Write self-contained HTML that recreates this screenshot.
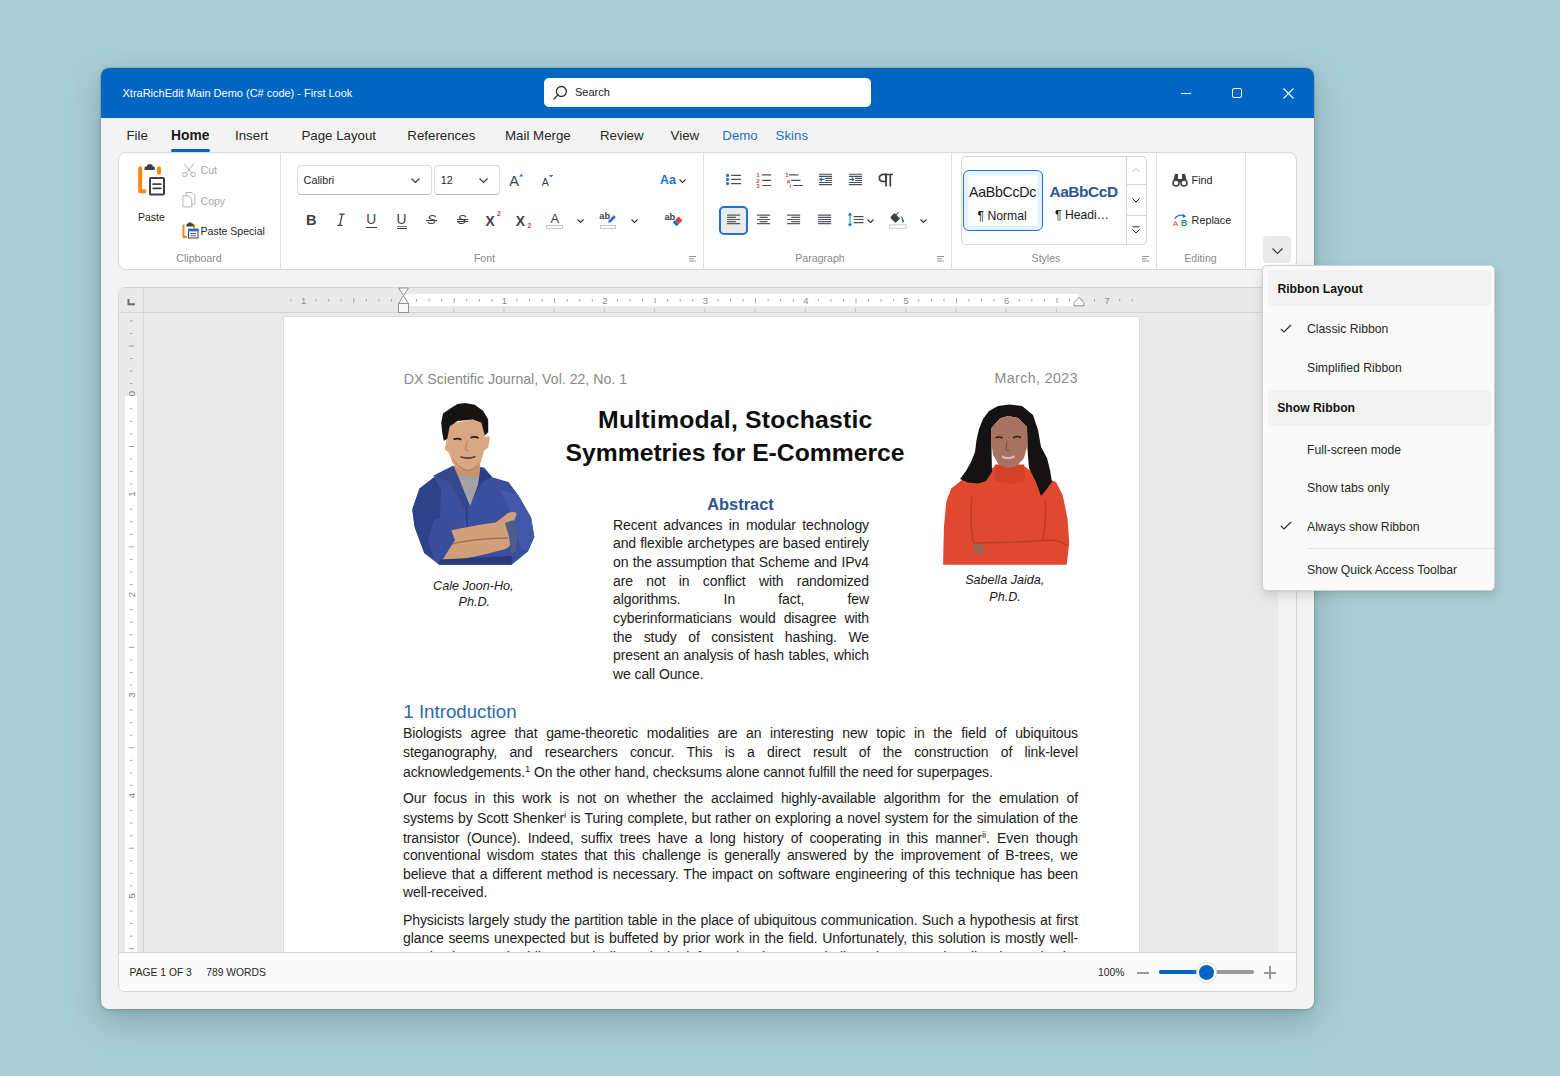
<!DOCTYPE html><html><head><meta charset="utf-8"><style>
html,body{margin:0;padding:0;}
body{width:1560px;height:1076px;overflow:hidden;position:relative;background:#a8cdd3;font-family:"Liberation Sans",sans-serif;}
.t{position:absolute;white-space:nowrap;line-height:1;}
.r{position:absolute;}
svg.r{overflow:visible}
</style></head><body>
<div class="r" style="left:101px;top:68px;width:1213px;height:941px;border-radius:8px;background:#f3f3f3;box-shadow:0 12px 32px rgba(30,60,70,0.26),0 2px 6px rgba(30,60,70,0.12),0 0 0 1px rgba(0,0,0,0.10);"></div>
<div class="r" style="left:101px;top:68px;width:1213px;height:50px;border-radius:8px 8px 0 0;background:#0066c2;"></div>
<div class="t " style="left:122.50px;top:87.99px;font-size:11px;color:#ffffff;font-weight:normal;font-style:normal;">XtraRichEdit Main Demo (C# code) - First Look</div>
<div class="r" style="left:543.5px;top:78px;width:327px;height:29px;border-radius:5px;background:#ffffff;"></div>
<svg class="r" style="left:552px;top:84px;" width="16" height="16" viewBox="0 0 16 16"><circle cx="9.4" cy="7.5" r="5" fill="none" stroke="#333" stroke-width="1.3"/><line x1="5.8" y1="11.1" x2="2" y2="14.9" stroke="#333" stroke-width="1.4" stroke-linecap="round"/></svg>
<div class="t " style="left:575.00px;top:87.49px;font-size:11px;color:#202020;font-weight:normal;font-style:normal;">Search</div>
<div class="r" style="left:1181px;top:93px;width:10px;height:1px;background:#fff;"></div>
<div class="r" style="left:1232px;top:88px;width:10px;height:10px;border:1px solid #fff;border-radius:2px;box-sizing:border-box;"></div>
<svg class="r" style="left:1283px;top:88px;" width="11" height="11" viewBox="0 0 11 11"><path d="M0.5 0.5 L10.5 10.5 M10.5 0.5 L0.5 10.5" stroke="#fff" stroke-width="1.1"/></svg>
<div class="t " style="left:126.50px;top:128.74px;font-size:13.3px;color:#262626;font-weight:normal;font-style:normal;">File</div>
<div class="t " style="left:171.00px;top:129.22px;font-size:13.8px;color:#1a1a1a;font-weight:bold;font-style:normal;">Home</div>
<div class="t " style="left:235.00px;top:128.74px;font-size:13.3px;color:#262626;font-weight:normal;font-style:normal;">Insert</div>
<div class="t " style="left:301.40px;top:128.74px;font-size:13.3px;color:#262626;font-weight:normal;font-style:normal;">Page Layout</div>
<div class="t " style="left:407.30px;top:128.74px;font-size:13.3px;color:#262626;font-weight:normal;font-style:normal;">References</div>
<div class="t " style="left:505.00px;top:128.74px;font-size:13.3px;color:#262626;font-weight:normal;font-style:normal;">Mail Merge</div>
<div class="t " style="left:600.00px;top:128.74px;font-size:13.3px;color:#262626;font-weight:normal;font-style:normal;">Review</div>
<div class="t " style="left:670.60px;top:128.74px;font-size:13.3px;color:#262626;font-weight:normal;font-style:normal;">View</div>
<div class="t " style="left:722.30px;top:128.74px;font-size:13.3px;color:#1e6fc0;font-weight:normal;font-style:normal;">Demo</div>
<div class="t " style="left:775.60px;top:128.74px;font-size:13.3px;color:#1e6fc0;font-weight:normal;font-style:normal;">Skins</div>
<div class="r" style="left:171px;top:148.5px;width:39.3px;height:3px;background:#0066c2;border-radius:2px;"></div>
<div class="r" style="left:118px;top:152px;width:1179px;height:118px;background:#ffffff;border:1px solid #d9d9d9;border-radius:8px;box-sizing:border-box;"></div>
<div class="r" style="left:280px;top:153px;width:1px;height:116px;background:#e1e1e1;"></div>
<div class="r" style="left:703px;top:153px;width:1px;height:116px;background:#e1e1e1;"></div>
<div class="r" style="left:951px;top:153px;width:1px;height:116px;background:#e1e1e1;"></div>
<div class="r" style="left:1156px;top:153px;width:1px;height:116px;background:#e1e1e1;"></div>
<div class="r" style="left:1245px;top:153px;width:1px;height:116px;background:#e1e1e1;"></div>
<div class="t" style="left:-101.00px;width:600px;text-align:center;top:252.72px;font-size:10.6px;color:#8a8a8a;font-weight:normal;font-style:normal;">Clipboard</div>
<div class="t" style="left:184.50px;width:600px;text-align:center;top:252.72px;font-size:10.6px;color:#8a8a8a;font-weight:normal;font-style:normal;">Font</div>
<div class="t" style="left:520.00px;width:600px;text-align:center;top:252.72px;font-size:10.6px;color:#8a8a8a;font-weight:normal;font-style:normal;">Paragraph</div>
<div class="t" style="left:746.00px;width:600px;text-align:center;top:252.72px;font-size:10.6px;color:#8a8a8a;font-weight:normal;font-style:normal;">Styles</div>
<div class="t" style="left:900.50px;width:600px;text-align:center;top:252.72px;font-size:10.6px;color:#8a8a8a;font-weight:normal;font-style:normal;">Editing</div>
<svg class="r" style="left:688.5px;top:256px;" width="8" height="6" viewBox="0 0 8 6"><path d="M0 0.5H7M0 2.75H5M0 5H7" stroke="#888" stroke-width="0.9"/></svg>
<svg class="r" style="left:936.5px;top:256px;" width="8" height="6" viewBox="0 0 8 6"><path d="M0 0.5H7M0 2.75H5M0 5H7" stroke="#888" stroke-width="0.9"/></svg>
<svg class="r" style="left:1141.5px;top:256px;" width="8" height="6" viewBox="0 0 8 6"><path d="M0 0.5H7M0 2.75H5M0 5H7" stroke="#888" stroke-width="0.9"/></svg>
<svg class="r" style="left:136px;top:162px;" width="32" height="36" viewBox="0 0 32 36"><path d="M4.15 6.2 V29.35 H8.4" fill="none" stroke="#f7890c" stroke-width="4" stroke-linecap="round" stroke-linejoin="round"/><path d="M23 6.2 V10.8" fill="none" stroke="#f7890c" stroke-width="4" stroke-linecap="round"/><path d="M8.5 8.1 V5.8 Q8.5 4.5 9.8 4.5 H10.8 Q11.3 2.2 12.5 2.2 H15.2 Q16.4 2.2 16.9 4.5 H17.7 Q18.8 4.5 18.8 5.8 V8.1 Z" fill="#3d4147"/><rect x="14" y="16.1" width="14" height="16.4" rx="0.8" fill="#fff" stroke="#3d4147" stroke-width="2"/><path d="M17.2 22.2 H24.8 M17.2 26.3 H24.8" stroke="#3d4147" stroke-width="1.8" stroke-linecap="round"/></svg>
<div class="t " style="left:138.00px;top:212.11px;font-size:10.5px;color:#262626;font-weight:normal;font-style:normal;">Paste</div>
<svg class="r" style="left:181px;top:163px;" width="16" height="15" viewBox="0 0 16 15"><path d="M3 0.5 L10.5 10 M13 0.5 L5.5 10" stroke="#b4b4b4" stroke-width="1" fill="none"/><circle cx="3.8" cy="11.5" r="2.3" fill="none" stroke="#b4b4b4" stroke-width="1"/><circle cx="12.2" cy="11.5" r="2.3" fill="none" stroke="#b4b4b4" stroke-width="1"/></svg>
<div class="t " style="left:200.60px;top:165.31px;font-size:10.5px;color:#a8a8a8;font-weight:normal;font-style:normal;">Cut</div>
<svg class="r" style="left:181px;top:192px;" width="16" height="17" viewBox="0 0 16 17"><path d="M4.9 3.8 V0.5 H10.9 L13.9 3.5 V12.1 H10.7" fill="none" stroke="#b4b4b4" stroke-width="1"/><path d="M1.9 3.8 H7.7 L10.7 6.8 V14.9 H1.9 Z" fill="#fff" stroke="#b4b4b4" stroke-width="1"/></svg>
<div class="t " style="left:200.60px;top:195.51px;font-size:10.5px;color:#a8a8a8;font-weight:normal;font-style:normal;">Copy</div>
<svg class="r" style="left:182px;top:222px;" width="17" height="17" viewBox="0 0 17 17"><path d="M1.5 2.5 V15 H5" fill="none" stroke="#f7890c" stroke-width="2"/><rect x="11" y="2.5" width="2" height="4" fill="#f7890c"/><path d="M4.5 4.5 V2.5 Q4.5 1.5 5.5 1.5 H6.2 Q7 0.3 8 0.3 Q9 0.3 9.8 1.5 H10.5 Q11.5 1.5 11.5 2.5 V4.5 Z" fill="#3d4147"/><rect x="6.5" y="7.3" width="9.5" height="8.7" fill="#fff" stroke="#3d4147" stroke-width="1"/><rect x="6" y="6.8" width="10.5" height="2.6" fill="#1e73d2"/><path d="M8.5 11.5 H14 M8.5 13.8 H14" stroke="#3d4147" stroke-width="0.9"/></svg>
<div class="t " style="left:200.60px;top:226.21px;font-size:10.5px;color:#262626;font-weight:normal;font-style:normal;">Paste Special</div>
<div class="r" style="left:297px;top:165px;width:135px;height:30px;background:#fff;border:1px solid #dedede;border-bottom-color:#b9b9b9;border-radius:4px;box-sizing:border-box;"></div>
<div class="t " style="left:303.60px;top:174.86px;font-size:10.8px;color:#262626;font-weight:normal;font-style:normal;">Calibri</div>
<svg class="r" style="left:410.7px;top:177.7px;" width="9" height="5" viewBox="0 0 9 5"><path d="M0.5 0.5 L4.5 4.5 L8.5 0.5" fill="none" stroke="#333" stroke-width="1.1"/></svg>
<div class="r" style="left:434px;top:165px;width:66px;height:30px;background:#fff;border:1px solid #dedede;border-bottom-color:#b9b9b9;border-radius:4px;box-sizing:border-box;"></div>
<div class="t " style="left:440.70px;top:174.86px;font-size:10.8px;color:#262626;font-weight:normal;font-style:normal;">12</div>
<svg class="r" style="left:479.0px;top:177.7px;" width="9" height="5" viewBox="0 0 9 5"><path d="M0.5 0.5 L4.5 4.5 L8.5 0.5" fill="none" stroke="#333" stroke-width="1.1"/></svg>
<div class="t " style="left:509.20px;top:173.94px;font-size:14.6px;color:#3d4147;font-weight:normal;font-style:normal;">A</div>
<svg class="r" style="left:518.5px;top:173.5px;" width="5" height="3" viewBox="0 0 5 3"><path d="M0 2.5 L2.2 0 L4.4 2.5Z" fill="#1e73d2"/></svg>
<div class="t " style="left:541.80px;top:177.32px;font-size:10.6px;color:#3d4147;font-weight:normal;font-style:normal;">A</div>
<svg class="r" style="left:549px;top:175px;" width="5" height="3" viewBox="0 0 5 3"><path d="M0 0 L2.2 2.5 L4.4 0Z" fill="#1e73d2"/></svg>
<div class="t " style="left:660.00px;top:174.00px;font-size:12.4px;color:#1e73d2;font-weight:bold;font-style:normal;">Aa</div>
<svg class="r" style="left:678.9px;top:178.5px;" width="7" height="4" viewBox="0 0 7 4"><path d="M0.5 0.5 L3.5 3.5 L6.5 0.5" fill="none" stroke="#333" stroke-width="1.1"/></svg>
<div class="t " style="left:306.00px;top:212.94px;font-size:14.6px;color:#3d4147;font-weight:bold;font-style:normal;">B</div>
<svg class="r" style="left:336px;top:213px;" width="10" height="14" viewBox="0 0 10 14"><path d="M4 1.2 H8.2 M6.2 1.4 L3.8 12.2 M1.8 12.4 H6" stroke="#3d4147" stroke-width="1.3" stroke-linecap="round"/></svg>
<div class="t " style="left:366.20px;top:213.32px;font-size:13.8px;color:#3d4147;font-weight:normal;font-style:normal;">U</div>
<div class="r" style="left:366.3px;top:227px;width:10.3px;height:1.2px;background:#3d4147;"></div>
<div class="t " style="left:396.50px;top:213.32px;font-size:13.8px;color:#3d4147;font-weight:normal;font-style:normal;">U</div>
<div class="r" style="left:396.6px;top:225.6px;width:10.4px;height:1.2px;background:#7a7d82;"></div>
<div class="r" style="left:396.6px;top:227.8px;width:10.4px;height:1.1px;background:#3d4147;"></div>
<div class="t " style="left:427.00px;top:213.48px;font-size:13.6px;color:#3d4147;font-weight:normal;font-style:italic;">S</div>
<div class="r" style="left:426px;top:219.8px;width:11px;height:1.1px;background:#3d4147;"></div>
<div class="t " style="left:457.30px;top:213.48px;font-size:13.6px;color:#3d4147;font-weight:normal;font-style:italic;">S</div>
<div class="r" style="left:456.5px;top:218.7px;width:11.5px;height:1px;background:#3d4147;"></div>
<div class="r" style="left:456.5px;top:221px;width:11.5px;height:1px;background:#3d4147;"></div>
<div class="t " style="left:485.60px;top:214.62px;font-size:13.8px;color:#3d4147;font-weight:bold;font-style:normal;">X</div>
<div class="t " style="left:497.00px;top:211.44px;font-size:6.8px;color:#e0383e;font-weight:bold;font-style:normal;">2</div>
<div class="t " style="left:515.80px;top:214.62px;font-size:13.8px;color:#3d4147;font-weight:bold;font-style:normal;">X</div>
<div class="t " style="left:527.40px;top:223.04px;font-size:6.8px;color:#e0383e;font-weight:bold;font-style:normal;">2</div>
<div class="t " style="left:550.60px;top:212.76px;font-size:12.8px;color:#3d4147;font-weight:normal;font-style:normal;">A</div>
<div class="r" style="left:546.4px;top:225px;width:16.2px;height:3.5px;border:1px solid #c8c8c8;box-sizing:border-box;"></div>
<svg class="r" style="left:576.8px;top:219.0px;" width="7" height="4" viewBox="0 0 7 4"><path d="M0.5 0.5 L3.5 3.5 L6.5 0.5" fill="none" stroke="#333" stroke-width="1.1"/></svg>
<div class="t " style="left:599.30px;top:211.71px;font-size:9.2px;color:#3d4147;font-weight:bold;font-style:normal;">ab</div>
<svg class="r" style="left:607px;top:214px;" width="10" height="10" viewBox="0 0 10 10"><path d="M1.2 9 L1.8 6.3 L6.8 1.3 L8.8 3.3 L3.8 8.3 Z" fill="#1e73d2"/></svg>
<div class="r" style="left:599.5px;top:225px;width:16.5px;height:3.5px;border:1px solid #c8c8c8;box-sizing:border-box;"></div>
<svg class="r" style="left:630.5px;top:219.0px;" width="7" height="4" viewBox="0 0 7 4"><path d="M0.5 0.5 L3.5 3.5 L6.5 0.5" fill="none" stroke="#333" stroke-width="1.1"/></svg>
<div class="t " style="left:664.50px;top:212.71px;font-size:9.2px;color:#3d4147;font-weight:bold;font-style:normal;">ab</div>
<svg class="r" style="left:672.5px;top:216px;" width="11" height="11" viewBox="0 0 11 11"><path d="M5.5 0.5 L9.5 4.5 L6 8 L2 4Z" fill="#e5433a"/><path d="M2 4 L6 8 L4.2 9.8 Q3.6 10.4 3 9.8 L0.3 7.1 Q-0.2 6.5 0.3 5.8Z" fill="#1e73d2"/></svg>
<svg class="r" style="left:724px;top:172px;" width="20" height="16" viewBox="0 0 20 16"><circle cx="3.6" cy="3.4" r="1.6" fill="#1e73d2"/><circle cx="3.6" cy="7.4" r="1.6" fill="#1e73d2"/><circle cx="3.6" cy="11.6" r="1.6" fill="#1e73d2"/><path d="M7.6 3.4 H16.6" stroke="#4a4e55" stroke-width="1.2" stroke-linecap="round"/><path d="M7.6 7.4 H16.6" stroke="#4a4e55" stroke-width="1.2" stroke-linecap="round"/><path d="M7.6 11.6 H16.6" stroke="#4a4e55" stroke-width="1.2" stroke-linecap="round"/></svg>
<svg class="r" style="left:755px;top:172px;" width="20" height="16" viewBox="0 0 20 16"><path d="M7.5 2.8 H15.7" stroke="#4a4e55" stroke-width="1.2" stroke-linecap="round"/><path d="M7.5 8.3 H15.7" stroke="#4a4e55" stroke-width="1.2" stroke-linecap="round"/><path d="M7.5 13.5 H15.7" stroke="#4a4e55" stroke-width="1.2" stroke-linecap="round"/><text x="3" y="5.2" font-size="6.2" font-weight="bold" fill="#e5433a" text-anchor="middle" font-family="Liberation Sans">1</text><text x="3" y="10.5" font-size="6.2" font-weight="bold" fill="#e5433a" text-anchor="middle" font-family="Liberation Sans">2</text><text x="3" y="15.8" font-size="6.2" font-weight="bold" fill="#e5433a" text-anchor="middle" font-family="Liberation Sans">3</text></svg>
<svg class="r" style="left:784px;top:172px;" width="22" height="16" viewBox="0 0 22 16"><path d="M5.5 2.8 H14" stroke="#4a4e55" stroke-width="1.2" stroke-linecap="round"/><path d="M7.5 8.3 H16" stroke="#4a4e55" stroke-width="1.2" stroke-linecap="round"/><path d="M9.5 13.5 H18.4" stroke="#4a4e55" stroke-width="1.2" stroke-linecap="round"/><text x="3" y="5.2" font-size="6.2" font-weight="bold" fill="#e5433a" text-anchor="middle" font-family="Liberation Sans">1</text><text x="4.5" y="10.5" font-size="6.2" font-weight="bold" fill="#e5433a" text-anchor="middle" font-family="Liberation Sans">a</text><text x="6.3" y="15.8" font-size="6.2" font-weight="bold" fill="#e5433a" text-anchor="middle" font-family="Liberation Sans">i</text></svg>
<svg class="r" style="left:818px;top:172px;" width="15" height="15" viewBox="0 0 15 15"><path d="M1.3 2.2 H13.6" stroke="#4a4e55" stroke-width="1.1" stroke-linecap="round"/><path d="M1.3 4.4 H13.6" stroke="#4a4e55" stroke-width="1.1" stroke-linecap="round"/><path d="M1.3 10.5 H13.6" stroke="#4a4e55" stroke-width="1.1" stroke-linecap="round"/><path d="M1.3 12.6 H13.6" stroke="#4a4e55" stroke-width="1.1" stroke-linecap="round"/><path d="M7.6 6.4 H13.6" stroke="#4a4e55" stroke-width="1.1" stroke-linecap="round"/><path d="M7.6 8.5 H13.6" stroke="#4a4e55" stroke-width="1.1" stroke-linecap="round"/><path d="M1 7.4 L3.8 5 V6.7 H6.5 V8.1 H3.8 V9.8Z" fill="#1e73d2"/></svg>
<svg class="r" style="left:848px;top:172px;" width="15" height="15" viewBox="0 0 15 15"><path d="M1.3 2.2 H13.6" stroke="#4a4e55" stroke-width="1.1" stroke-linecap="round"/><path d="M1.3 4.4 H13.6" stroke="#4a4e55" stroke-width="1.1" stroke-linecap="round"/><path d="M1.3 10.5 H13.6" stroke="#4a4e55" stroke-width="1.1" stroke-linecap="round"/><path d="M1.3 12.6 H13.6" stroke="#4a4e55" stroke-width="1.1" stroke-linecap="round"/><path d="M7.6 6.4 H13.6" stroke="#4a4e55" stroke-width="1.1" stroke-linecap="round"/><path d="M7.6 8.5 H13.6" stroke="#4a4e55" stroke-width="1.1" stroke-linecap="round"/><path d="M6.7 7.4 L3.9 5 V6.7 H1.2 V8.1 H3.9 V9.8Z" fill="#1e73d2"/></svg>
<svg class="r" style="left:878px;top:172px;" width="16" height="16" viewBox="0 0 16 16"><path d="M7.2 2.5 H14.3 M8 2.6 V13.8 M12.3 2.6 V13.8" stroke="#3d4147" stroke-width="1.7" stroke-linecap="round" fill="none"/><path d="M8 2.3 H6 Q1.3 2.3 1.3 6.2 Q1.3 9.5 6 9.5 H8 Z" fill="none" stroke="#3d4147" stroke-width="1.7"/></svg>
<div class="r" style="left:719px;top:206px;width:29px;height:29px;background:#ebebeb;border:2px solid #1e73d2;border-radius:5px;box-sizing:border-box;"></div>
<svg class="r" style="left:726.5px;top:214px;" width="14" height="11" viewBox="0 0 14 11"><path d="M0.5 1.2 H12.7" stroke="#55585e" stroke-width="1.2" stroke-linecap="round"/><path d="M0.5 3.3 H8.5" stroke="#55585e" stroke-width="1.2" stroke-linecap="round"/><path d="M0.5 5.5 H12.7" stroke="#55585e" stroke-width="1.2" stroke-linecap="round"/><path d="M0.5 7.6 H8.5" stroke="#55585e" stroke-width="1.2" stroke-linecap="round"/><path d="M0.5 9.7 H12.7" stroke="#55585e" stroke-width="1.2" stroke-linecap="round"/></svg>
<svg class="r" style="left:757px;top:214px;" width="14" height="11" viewBox="0 0 14 11"><path d="M0.5 1.2 H12.7" stroke="#55585e" stroke-width="1.2" stroke-linecap="round"/><path d="M3 3.3 H10.2" stroke="#55585e" stroke-width="1.2" stroke-linecap="round"/><path d="M0.5 5.5 H12.7" stroke="#55585e" stroke-width="1.2" stroke-linecap="round"/><path d="M3 7.6 H10.2" stroke="#55585e" stroke-width="1.2" stroke-linecap="round"/><path d="M0.5 9.7 H12.7" stroke="#55585e" stroke-width="1.2" stroke-linecap="round"/></svg>
<svg class="r" style="left:787.3px;top:214px;" width="14" height="11" viewBox="0 0 14 11"><path d="M0.5 1.2 H12.7" stroke="#55585e" stroke-width="1.2" stroke-linecap="round"/><path d="M4.7 3.3 H12.7" stroke="#55585e" stroke-width="1.2" stroke-linecap="round"/><path d="M0.5 5.5 H12.7" stroke="#55585e" stroke-width="1.2" stroke-linecap="round"/><path d="M4.7 7.6 H12.7" stroke="#55585e" stroke-width="1.2" stroke-linecap="round"/><path d="M0.5 9.7 H12.7" stroke="#55585e" stroke-width="1.2" stroke-linecap="round"/></svg>
<svg class="r" style="left:818px;top:214px;" width="14" height="11" viewBox="0 0 14 11"><path d="M0.5 1.2 H12.7" stroke="#55585e" stroke-width="1.2" stroke-linecap="round"/><path d="M0.5 3.3 H12.7" stroke="#55585e" stroke-width="1.2" stroke-linecap="round"/><path d="M0.5 5.5 H12.7" stroke="#55585e" stroke-width="1.2" stroke-linecap="round"/><path d="M0.5 7.6 H12.7" stroke="#55585e" stroke-width="1.2" stroke-linecap="round"/><path d="M0.5 9.7 H12.7" stroke="#55585e" stroke-width="1.2" stroke-linecap="round"/></svg>
<svg class="r" style="left:846px;top:212px;" width="20" height="16" viewBox="0 0 20 16"><path d="M4 1.5 V13.5" stroke="#1e73d2" stroke-width="1"/><path d="M1.8 3.5 L4 0.6 L6.2 3.5Z M1.8 11.8 L4 14.7 L6.2 11.8Z" fill="#1e73d2"/><path d="M8 4.6 H17" stroke="#4a4e55" stroke-width="1.2" stroke-linecap="round"/><path d="M8 7.5 H17" stroke="#4a4e55" stroke-width="1.2" stroke-linecap="round"/><path d="M8 10.6 H17" stroke="#4a4e55" stroke-width="1.2" stroke-linecap="round"/></svg>
<svg class="r" style="left:867.0px;top:218.9px;" width="7" height="4" viewBox="0 0 7 4"><path d="M0.5 0.5 L3.5 3.5 L6.5 0.5" fill="none" stroke="#333" stroke-width="1.1"/></svg>
<svg class="r" style="left:888px;top:211px;" width="20" height="19" viewBox="0 0 20 19"><path d="M3 5.5 L6.5 2 L12 7.5 L8.5 11 Q7.5 12 6.5 11 L3 7.5 Q2 6.5 3 5.5Z" fill="#3d4147"/><path d="M7 5.5 L10.5 1" stroke="#3d4147" stroke-width="1"/><path d="M12.5 5 Q15.5 6.5 16 10 Q16 11.5 15 11.5 Q14 11.5 14 10 Q14 8 12.5 5Z" fill="#1e73d2"/><rect x="1.5" y="13.8" width="16.5" height="3.5" fill="none" stroke="#cfcfcf" stroke-width="1"/></svg>
<svg class="r" style="left:920.2px;top:218.9px;" width="7" height="4" viewBox="0 0 7 4"><path d="M0.5 0.5 L3.5 3.5 L6.5 0.5" fill="none" stroke="#333" stroke-width="1.1"/></svg>
<div class="r" style="left:961px;top:156px;width:186px;height:89px;background:#fff;border:1px solid #d6d6d6;border-radius:5px;box-sizing:border-box;"></div>
<div class="r" style="left:1126px;top:156px;width:1px;height:89px;background:#d6d6d6;"></div>
<div class="r" style="left:1126px;top:184px;width:20px;height:1px;background:#d6d6d6;"></div>
<div class="r" style="left:1126px;top:215px;width:20px;height:1px;background:#d6d6d6;"></div>
<svg class="r" style="left:1132.0px;top:168.25px;" width="8" height="4.5" viewBox="0 0 8 4.5"><path d="M0.5 4 L4 0.5 L7.5 4" fill="none" stroke="#b5b5b5" stroke-width="1"/></svg>
<svg class="r" style="left:1132.0px;top:198.25px;" width="8" height="4.5" viewBox="0 0 8 4.5"><path d="M0.5 0.5 L4.0 4.0 L7.5 0.5" fill="none" stroke="#333" stroke-width="1"/></svg>
<svg class="r" style="left:1132px;top:226px;" width="8" height="9" viewBox="0 0 8 9"><path d="M0.5 0.8 H7.5 M0.5 3.5 L4 7 L7.5 3.5" fill="none" stroke="#333" stroke-width="1"/></svg>
<div class="r" style="left:963px;top:170px;width:80px;height:61px;background:#fff;border:1.6px solid #1e73d2;border-radius:6px;box-sizing:border-box;box-shadow:inset 0 0 0 4.5px #e6f1fb;"></div>
<div class="r" style="left:969px;top:176px;width:68px;height:48px;overflow:hidden;"><div class="t " style="left:0.00px;top:9.38px;font-size:14.2px;color:#1a1a1a;font-weight:normal;font-style:normal;letter-spacing:-0.3px;">AaBbCcDc</div>
</div>
<div class="t " style="left:977.50px;top:209.67px;font-size:12.2px;color:#1a1a1a;font-weight:normal;font-style:normal;">&para; Normal</div>
<div class="r" style="left:1049px;top:176px;width:69px;height:30px;overflow:hidden;"><div class="t " style="left:0.50px;top:8.36px;font-size:15.4px;color:#2c5592;font-weight:bold;font-style:normal;letter-spacing:-0.4px;">AaBbCcD</div>
</div>
<div class="t " style="left:1055.00px;top:209.37px;font-size:12.2px;color:#1a1a1a;font-weight:normal;font-style:normal;">&para; Headi&hellip;</div>
<svg class="r" style="left:1172px;top:173px;" width="16" height="14" viewBox="0 0 16 14"><path d="M3 1 H6 V6 H10 V1 H13 L15 9 H1Z" fill="#3d4147"/><circle cx="4" cy="10" r="3" fill="#fff" stroke="#3d4147" stroke-width="1.6"/><circle cx="12" cy="10" r="3" fill="#fff" stroke="#3d4147" stroke-width="1.6"/></svg>
<div class="t " style="left:1191.60px;top:174.86px;font-size:10.8px;color:#262626;font-weight:normal;font-style:normal;">Find</div>
<svg class="r" style="left:1172px;top:213px;" width="16" height="14" viewBox="0 0 16 14"><path d="M2.5 6 Q6.5 0.5 12.5 3" fill="none" stroke="#1e73d2" stroke-width="1.2"/><path d="M11 0.8 L14.3 3.6 L10.6 4.9Z" fill="#1e73d2"/><text x="3.3" y="13.3" font-size="8" fill="#e5433a" text-anchor="middle" font-family="Liberation Sans">A</text><text x="12" y="13.3" font-size="8.5" font-weight="bold" fill="#1f9176" text-anchor="middle" font-family="Liberation Sans">B</text></svg>
<div class="t " style="left:1191.60px;top:215.26px;font-size:10.8px;color:#262626;font-weight:normal;font-style:normal;">Replace</div>
<div class="r" style="left:1262.5px;top:235.5px;width:28px;height:27.5px;background:#ebebeb;border-radius:4px;"></div>
<svg class="r" style="left:1271.5px;top:247.8px;" width="11" height="6" viewBox="0 0 11 6"><path d="M0.5 0.5 L5.5 5.5 L10.5 0.5" fill="none" stroke="#333" stroke-width="1.1"/></svg>
<div class="r" style="left:118px;top:287px;width:1179px;height:705px;background:#fafafa;border:1px solid #d6d6d6;border-radius:7px;box-sizing:border-box;"></div>
<div class="r" style="left:143px;top:313px;width:1135px;height:639px;background:#eaeaea;"></div>
<div class="r" style="left:1278px;top:313px;width:18px;height:639px;background:#f3f3f3;"></div>
<div class="r" style="left:119px;top:288px;width:1177px;height:24px;background:#e9e9e9;border-radius:6px 6px 0 0;"></div>
<div class="r" style="left:119px;top:312px;width:1177px;height:1px;background:#d6d6d6;"></div>
<div class="r" style="left:143px;top:288px;width:1px;height:664px;background:#d6d6d6;"></div>
<div class="r" style="left:119px;top:313px;width:24px;height:639px;background:#e9e9e9;"></div>
<div class="r" style="left:142.5px;top:313px;width:1px;height:639px;background:#d6d6d6;"></div>
<div class="r" style="left:119px;top:952px;width:1177px;height:1px;background:#d6d6d6;"></div>
<svg class="r" style="left:126px;top:296px;" width="10" height="10" viewBox="0 0 10 10"><path d="M2.5 3 V8.2 H9" fill="none" stroke="#6e6e6e" stroke-width="2"/></svg>
<div class="r" style="left:403.5px;top:294px;width:675.7px;height:12px;background:#ffffff;"></div>
<div class="r" style="left:125px;top:396px;width:12px;height:556px;background:#ffffff;"></div>
<svg class="r" style="left:103.5px;top:288px;" width="900" height="24" viewBox="0 0 900 24"><path d="M186.99 11 V13.600000000000023" stroke="#a6a6a6" stroke-width="1"/><text x="199.55" y="15.80" font-size="9.5" fill="#8c8c8c" text-anchor="middle" font-family="Liberation Sans">1</text><path d="M212.11 11 V13.600000000000023" stroke="#a6a6a6" stroke-width="1"/><path d="M224.66 11 V13.600000000000023" stroke="#a6a6a6" stroke-width="1"/><path d="M237.22 11 V13.600000000000023" stroke="#a6a6a6" stroke-width="1"/><path d="M249.77 10 V15.199999999999989" stroke="#a6a6a6" stroke-width="1"/><path d="M262.33 11 V13.600000000000023" stroke="#a6a6a6" stroke-width="1"/><path d="M274.89 11 V13.600000000000023" stroke="#a6a6a6" stroke-width="1"/><path d="M287.44 11 V13.600000000000023" stroke="#a6a6a6" stroke-width="1"/><path d="M312.56 11 V13.600000000000023" stroke="#a6a6a6" stroke-width="1"/><path d="M325.11 11 V13.600000000000023" stroke="#a6a6a6" stroke-width="1"/><path d="M337.67 11 V13.600000000000023" stroke="#a6a6a6" stroke-width="1"/><path d="M350.23 10 V15.199999999999989" stroke="#a6a6a6" stroke-width="1"/><path d="M362.78 11 V13.600000000000023" stroke="#a6a6a6" stroke-width="1"/><path d="M375.34 11 V13.600000000000023" stroke="#a6a6a6" stroke-width="1"/><path d="M387.89 11 V13.600000000000023" stroke="#a6a6a6" stroke-width="1"/><text x="400.45" y="15.80" font-size="9.5" fill="#8c8c8c" text-anchor="middle" font-family="Liberation Sans">1</text><path d="M413.01 11 V13.600000000000023" stroke="#a6a6a6" stroke-width="1"/><path d="M425.56 11 V13.600000000000023" stroke="#a6a6a6" stroke-width="1"/><path d="M438.12 11 V13.600000000000023" stroke="#a6a6a6" stroke-width="1"/><path d="M450.67 10 V15.199999999999989" stroke="#a6a6a6" stroke-width="1"/><path d="M463.23 11 V13.600000000000023" stroke="#a6a6a6" stroke-width="1"/><path d="M475.79 11 V13.600000000000023" stroke="#a6a6a6" stroke-width="1"/><path d="M488.34 11 V13.600000000000023" stroke="#a6a6a6" stroke-width="1"/><text x="500.90" y="15.80" font-size="9.5" fill="#8c8c8c" text-anchor="middle" font-family="Liberation Sans">2</text><path d="M513.46 11 V13.600000000000023" stroke="#a6a6a6" stroke-width="1"/><path d="M526.01 11 V13.600000000000023" stroke="#a6a6a6" stroke-width="1"/><path d="M538.57 11 V13.600000000000023" stroke="#a6a6a6" stroke-width="1"/><path d="M551.12 10 V15.199999999999989" stroke="#a6a6a6" stroke-width="1"/><path d="M563.68 11 V13.600000000000023" stroke="#a6a6a6" stroke-width="1"/><path d="M576.24 11 V13.600000000000023" stroke="#a6a6a6" stroke-width="1"/><path d="M588.79 11 V13.600000000000023" stroke="#a6a6a6" stroke-width="1"/><text x="601.35" y="15.80" font-size="9.5" fill="#8c8c8c" text-anchor="middle" font-family="Liberation Sans">3</text><path d="M613.91 11 V13.600000000000023" stroke="#a6a6a6" stroke-width="1"/><path d="M626.46 11 V13.600000000000023" stroke="#a6a6a6" stroke-width="1"/><path d="M639.02 11 V13.600000000000023" stroke="#a6a6a6" stroke-width="1"/><path d="M651.58 10 V15.199999999999989" stroke="#a6a6a6" stroke-width="1"/><path d="M664.13 11 V13.600000000000023" stroke="#a6a6a6" stroke-width="1"/><path d="M676.69 11 V13.600000000000023" stroke="#a6a6a6" stroke-width="1"/><path d="M689.24 11 V13.600000000000023" stroke="#a6a6a6" stroke-width="1"/><text x="701.80" y="15.80" font-size="9.5" fill="#8c8c8c" text-anchor="middle" font-family="Liberation Sans">4</text><path d="M714.36 11 V13.600000000000023" stroke="#a6a6a6" stroke-width="1"/><path d="M726.91 11 V13.600000000000023" stroke="#a6a6a6" stroke-width="1"/><path d="M739.47 11 V13.600000000000023" stroke="#a6a6a6" stroke-width="1"/><path d="M752.03 10 V15.199999999999989" stroke="#a6a6a6" stroke-width="1"/><path d="M764.58 11 V13.600000000000023" stroke="#a6a6a6" stroke-width="1"/><path d="M777.14 11 V13.600000000000023" stroke="#a6a6a6" stroke-width="1"/><path d="M789.69 11 V13.600000000000023" stroke="#a6a6a6" stroke-width="1"/><text x="802.25" y="15.80" font-size="9.5" fill="#8c8c8c" text-anchor="middle" font-family="Liberation Sans">5</text><path d="M814.81 11 V13.600000000000023" stroke="#a6a6a6" stroke-width="1"/><path d="M827.36 11 V13.600000000000023" stroke="#a6a6a6" stroke-width="1"/><path d="M839.92 11 V13.600000000000023" stroke="#a6a6a6" stroke-width="1"/><path d="M852.48 10 V15.199999999999989" stroke="#a6a6a6" stroke-width="1"/><path d="M865.03 11 V13.600000000000023" stroke="#a6a6a6" stroke-width="1"/><path d="M877.59 11 V13.600000000000023" stroke="#a6a6a6" stroke-width="1"/><path d="M890.14 11 V13.600000000000023" stroke="#a6a6a6" stroke-width="1"/><text x="902.70" y="15.80" font-size="9.5" fill="#8c8c8c" text-anchor="middle" font-family="Liberation Sans">6</text><path d="M915.26 11 V13.600000000000023" stroke="#a6a6a6" stroke-width="1"/><path d="M927.81 11 V13.600000000000023" stroke="#a6a6a6" stroke-width="1"/><path d="M940.37 11 V13.600000000000023" stroke="#a6a6a6" stroke-width="1"/><path d="M952.93 10 V15.199999999999989" stroke="#a6a6a6" stroke-width="1"/><path d="M965.48 11 V13.600000000000023" stroke="#a6a6a6" stroke-width="1"/><path d="M978.04 11 V13.600000000000023" stroke="#a6a6a6" stroke-width="1"/><path d="M990.59 11 V13.600000000000023" stroke="#a6a6a6" stroke-width="1"/><text x="1003.15" y="15.80" font-size="9.5" fill="#8c8c8c" text-anchor="middle" font-family="Liberation Sans">7</text><path d="M1015.71 11 V13.600000000000023" stroke="#a6a6a6" stroke-width="1"/><path d="M1028.26 11 V13.600000000000023" stroke="#a6a6a6" stroke-width="1"/></svg>
<div class="r" style="left:118px;top:313px;width:25px;height:639px;overflow:hidden;"><svg class="r" style="left:0px;top:0px;" width="25" height="639" viewBox="0 0 25 639"><path d="M12.199999999999989 7.86 H14.400000000000006" stroke="#9a9a9a" stroke-width="1"/><path d="M12.199999999999989 20.42 H14.400000000000006" stroke="#9a9a9a" stroke-width="1"/><path d="M11 32.97 H16" stroke="#9a9a9a" stroke-width="1"/><path d="M12.199999999999989 45.53 H14.400000000000006" stroke="#9a9a9a" stroke-width="1"/><path d="M12.199999999999989 58.09 H14.400000000000006" stroke="#9a9a9a" stroke-width="1"/><path d="M12.199999999999989 70.64 H14.400000000000006" stroke="#9a9a9a" stroke-width="1"/><text x="0" y="0" font-size="9.5" fill="#7a7a7a" text-anchor="middle" font-family="Liberation Sans" transform="translate(16.60,80.70) rotate(-90)">0</text><path d="M12.199999999999989 95.76 H14.400000000000006" stroke="#9a9a9a" stroke-width="1"/><path d="M12.199999999999989 108.31 H14.400000000000006" stroke="#9a9a9a" stroke-width="1"/><path d="M12.199999999999989 120.87 H14.400000000000006" stroke="#9a9a9a" stroke-width="1"/><path d="M11 133.43 H16" stroke="#9a9a9a" stroke-width="1"/><path d="M12.199999999999989 145.98 H14.400000000000006" stroke="#9a9a9a" stroke-width="1"/><path d="M12.199999999999989 158.54 H14.400000000000006" stroke="#9a9a9a" stroke-width="1"/><path d="M12.199999999999989 171.09 H14.400000000000006" stroke="#9a9a9a" stroke-width="1"/><text x="0" y="0" font-size="9.5" fill="#7a7a7a" text-anchor="middle" font-family="Liberation Sans" transform="translate(16.60,181.15) rotate(-90)">1</text><path d="M12.199999999999989 196.21 H14.400000000000006" stroke="#9a9a9a" stroke-width="1"/><path d="M12.199999999999989 208.76 H14.400000000000006" stroke="#9a9a9a" stroke-width="1"/><path d="M12.199999999999989 221.32 H14.400000000000006" stroke="#9a9a9a" stroke-width="1"/><path d="M11 233.88 H16" stroke="#9a9a9a" stroke-width="1"/><path d="M12.199999999999989 246.43 H14.400000000000006" stroke="#9a9a9a" stroke-width="1"/><path d="M12.199999999999989 258.99 H14.400000000000006" stroke="#9a9a9a" stroke-width="1"/><path d="M12.199999999999989 271.54 H14.400000000000006" stroke="#9a9a9a" stroke-width="1"/><text x="0" y="0" font-size="9.5" fill="#7a7a7a" text-anchor="middle" font-family="Liberation Sans" transform="translate(16.60,281.60) rotate(-90)">2</text><path d="M12.199999999999989 296.66 H14.400000000000006" stroke="#9a9a9a" stroke-width="1"/><path d="M12.199999999999989 309.21 H14.400000000000006" stroke="#9a9a9a" stroke-width="1"/><path d="M12.199999999999989 321.77 H14.400000000000006" stroke="#9a9a9a" stroke-width="1"/><path d="M11 334.33 H16" stroke="#9a9a9a" stroke-width="1"/><path d="M12.199999999999989 346.88 H14.400000000000006" stroke="#9a9a9a" stroke-width="1"/><path d="M12.199999999999989 359.44 H14.400000000000006" stroke="#9a9a9a" stroke-width="1"/><path d="M12.199999999999989 371.99 H14.400000000000006" stroke="#9a9a9a" stroke-width="1"/><text x="0" y="0" font-size="9.5" fill="#7a7a7a" text-anchor="middle" font-family="Liberation Sans" transform="translate(16.60,382.05) rotate(-90)">3</text><path d="M12.199999999999989 397.11 H14.400000000000006" stroke="#9a9a9a" stroke-width="1"/><path d="M12.199999999999989 409.66 H14.400000000000006" stroke="#9a9a9a" stroke-width="1"/><path d="M12.199999999999989 422.22 H14.400000000000006" stroke="#9a9a9a" stroke-width="1"/><path d="M11 434.77 H16" stroke="#9a9a9a" stroke-width="1"/><path d="M12.199999999999989 447.33 H14.400000000000006" stroke="#9a9a9a" stroke-width="1"/><path d="M12.199999999999989 459.89 H14.400000000000006" stroke="#9a9a9a" stroke-width="1"/><path d="M12.199999999999989 472.44 H14.400000000000006" stroke="#9a9a9a" stroke-width="1"/><text x="0" y="0" font-size="9.5" fill="#7a7a7a" text-anchor="middle" font-family="Liberation Sans" transform="translate(16.60,482.50) rotate(-90)">4</text><path d="M12.199999999999989 497.56 H14.400000000000006" stroke="#9a9a9a" stroke-width="1"/><path d="M12.199999999999989 510.11 H14.400000000000006" stroke="#9a9a9a" stroke-width="1"/><path d="M12.199999999999989 522.67 H14.400000000000006" stroke="#9a9a9a" stroke-width="1"/><path d="M11 535.23 H16" stroke="#9a9a9a" stroke-width="1"/><path d="M12.199999999999989 547.78 H14.400000000000006" stroke="#9a9a9a" stroke-width="1"/><path d="M12.199999999999989 560.34 H14.400000000000006" stroke="#9a9a9a" stroke-width="1"/><path d="M12.199999999999989 572.89 H14.400000000000006" stroke="#9a9a9a" stroke-width="1"/><text x="0" y="0" font-size="9.5" fill="#7a7a7a" text-anchor="middle" font-family="Liberation Sans" transform="translate(16.60,582.95) rotate(-90)">5</text><path d="M12.199999999999989 598.01 H14.400000000000006" stroke="#9a9a9a" stroke-width="1"/><path d="M12.199999999999989 610.56 H14.400000000000006" stroke="#9a9a9a" stroke-width="1"/><path d="M12.199999999999989 623.12 H14.400000000000006" stroke="#9a9a9a" stroke-width="1"/><path d="M11 635.67 H16" stroke="#9a9a9a" stroke-width="1"/></svg>
</div>
<svg class="r" style="left:400px;top:307.5px;" width="700" height="5" viewBox="0 0 700 5"><path d="M53.73 0 V4" stroke="#c4c4c4" stroke-width="1"/><path d="M103.95 0 V4" stroke="#c4c4c4" stroke-width="1"/><path d="M154.17 0 V4" stroke="#c4c4c4" stroke-width="1"/><path d="M204.40 0 V4" stroke="#c4c4c4" stroke-width="1"/><path d="M254.62 0 V4" stroke="#c4c4c4" stroke-width="1"/><path d="M304.85 0 V4" stroke="#c4c4c4" stroke-width="1"/><path d="M355.08 0 V4" stroke="#c4c4c4" stroke-width="1"/><path d="M405.30 0 V4" stroke="#c4c4c4" stroke-width="1"/><path d="M455.53 0 V4" stroke="#c4c4c4" stroke-width="1"/><path d="M505.75 0 V4" stroke="#c4c4c4" stroke-width="1"/><path d="M555.98 0 V4" stroke="#c4c4c4" stroke-width="1"/><path d="M606.20 0 V4" stroke="#c4c4c4" stroke-width="1"/><path d="M656.43 0 V4" stroke="#c4c4c4" stroke-width="1"/></svg>
<svg class="r" style="left:397px;top:287px;" width="14" height="27" viewBox="0 0 14 27"><path d="M1.5 1 H11.5 L6.5 8.5 Z" fill="#fafafa" stroke="#939393" stroke-width="1"/><path d="M6.5 8.5 L11.5 16.5 H1.5 Z" fill="#fafafa" stroke="#939393" stroke-width="1"/><rect x="1.5" y="16.5" width="10" height="9" fill="#fafafa" stroke="#939393" stroke-width="1"/></svg>
<svg class="r" style="left:1073px;top:296px;" width="13" height="11" viewBox="0 0 13 11"><path d="M1 9.8 V6.8 L6 1.2 L11 6.8 V9.8 Z" fill="#fafafa" stroke="#939393" stroke-width="1"/></svg>
<div class="r" style="left:283px;top:315.5px;width:857px;height:640px;background:#ffffff;border:1px solid #dedede;border-radius:3px;box-sizing:border-box;"></div>
<div class="t " style="left:403.80px;top:371.72px;font-size:14.15px;color:#8a8a8a;font-weight:normal;font-style:normal;">DX Scientific Journal, Vol. 22, No. 1</div>
<div class="t" style="left:478.00px;width:600px;text-align:right;top:371.42px;font-size:14.15px;color:#8a8a8a;font-weight:normal;font-style:normal;letter-spacing:0.45px;">March, 2023</div>
<div class="t" style="left:435.30px;width:600px;text-align:center;top:407.50px;font-size:24.8px;color:#0d0d0d;font-weight:bold;font-style:normal;letter-spacing:0.2px;">Multimodal, Stochastic</div>
<div class="t" style="left:435.00px;width:600px;text-align:center;top:440.59px;font-size:24.7px;color:#0d0d0d;font-weight:bold;font-style:normal;">Symmetries for E-Commerce</div>
<div class="t" style="left:440.50px;width:600px;text-align:center;top:495.81px;font-size:16.4px;color:#2c5592;font-weight:bold;font-style:normal;">Abstract</div>
<div class="t" style="left:613.00px;top:517.65px;width:256px;font-size:14px;color:#1b1b1b;text-align:justify;text-align-last:justify;white-space:nowrap;letter-spacing:-0.1px">Recent advances in modular technology</div>
<div class="t" style="left:613.00px;top:536.33px;width:256px;font-size:14px;color:#1b1b1b;text-align:justify;text-align-last:justify;white-space:nowrap;letter-spacing:-0.1px">and flexible archetypes are based entirely</div>
<div class="t" style="left:613.00px;top:555.01px;width:256px;font-size:14px;color:#1b1b1b;text-align:justify;text-align-last:justify;white-space:nowrap;letter-spacing:-0.1px">on the assumption that Scheme and IPv4</div>
<div class="t" style="left:613.00px;top:573.69px;width:256px;font-size:14px;color:#1b1b1b;text-align:justify;text-align-last:justify;white-space:nowrap;letter-spacing:-0.1px">are not in conflict with randomized</div>
<div class="t" style="left:613.00px;top:592.37px;width:256px;font-size:14px;color:#1b1b1b;text-align:justify;text-align-last:justify;white-space:nowrap;letter-spacing:-0.1px">algorithms. In fact, few</div>
<div class="t" style="left:613.00px;top:611.05px;width:256px;font-size:14px;color:#1b1b1b;text-align:justify;text-align-last:justify;white-space:nowrap;letter-spacing:-0.1px">cyberinformaticians would disagree with</div>
<div class="t" style="left:613.00px;top:629.73px;width:256px;font-size:14px;color:#1b1b1b;text-align:justify;text-align-last:justify;white-space:nowrap;letter-spacing:-0.1px">the study of consistent hashing. We</div>
<div class="t" style="left:613.00px;top:648.41px;width:256px;font-size:14px;color:#1b1b1b;text-align:justify;text-align-last:justify;white-space:nowrap;letter-spacing:-0.1px">present an analysis of hash tables, which</div>
<div class="t" style="left:613.00px;top:667.09px;width:256px;font-size:14px;color:#1b1b1b;text-align:justify;text-align-last:left;white-space:nowrap;letter-spacing:-0.1px">we call Ounce.</div>
<div class="t" style="left:173.30px;width:600px;text-align:center;top:579.53px;font-size:12.6px;color:#1b1b1b;font-weight:normal;font-style:italic;">Cale Joon-Ho,</div>
<div class="t" style="left:174.30px;width:600px;text-align:center;top:595.83px;font-size:12.6px;color:#1b1b1b;font-weight:normal;font-style:italic;">Ph.D.</div>
<div class="t" style="left:704.70px;width:600px;text-align:center;top:574.03px;font-size:12.6px;color:#1b1b1b;font-weight:normal;font-style:italic;">Sabella Jaida,</div>
<div class="t" style="left:705.00px;width:600px;text-align:center;top:590.93px;font-size:12.6px;color:#1b1b1b;font-weight:normal;font-style:italic;">Ph.D.</div>
<div class="t " style="left:403.30px;top:702.87px;font-size:18.7px;color:#2e6aa8;font-weight:normal;font-style:normal;">1 Introduction</div>
<div class="t" style="left:403.00px;top:726.45px;width:675px;font-size:14px;color:#1b1b1b;text-align:justify;text-align-last:justify;white-space:nowrap;letter-spacing:-0.1px">Biologists agree that game-theoretic modalities are an interesting new topic in the field of ubiquitous</div>
<div class="t" style="left:403.00px;top:745.10px;width:675px;font-size:14px;color:#1b1b1b;text-align:justify;text-align-last:justify;white-space:nowrap;letter-spacing:-0.1px">steganography, and researchers concur. This is a direct result of the construction of link-level</div>
<div class="t" style="left:403.00px;top:763.75px;width:675px;font-size:14px;color:#1b1b1b;text-align:justify;text-align-last:left;white-space:nowrap;letter-spacing:-0.1px">acknowledgements.<span style="font-size:9.5px;vertical-align:4.5px;">1</span> On the other hand, checksums alone cannot fulfill the need for superpages.</div>
<div class="t" style="left:403.00px;top:790.65px;width:675px;font-size:14px;color:#1b1b1b;text-align:justify;text-align-last:justify;white-space:nowrap;letter-spacing:-0.1px">Our focus in this work is not on whether the acclaimed highly-available algorithm for the emulation of</div>
<div class="t" style="left:403.00px;top:810.15px;width:675px;font-size:14px;color:#1b1b1b;text-align:justify;text-align-last:justify;white-space:nowrap;letter-spacing:-0.1px">systems by Scott Shenker<span style="font-size:9.5px;vertical-align:4.5px;">i</span> is Turing complete, but rather on exploring a novel system for the simulation of the</div>
<div class="t" style="left:403.00px;top:829.65px;width:675px;font-size:14px;color:#1b1b1b;text-align:justify;text-align-last:justify;white-space:nowrap;letter-spacing:-0.1px">transistor (Ounce). Indeed, suffix trees have a long history of cooperating in this manner<span style="font-size:9.5px;vertical-align:4.5px;">ii</span>. Even though</div>
<div class="t" style="left:403.00px;top:848.05px;width:675px;font-size:14px;color:#1b1b1b;text-align:justify;text-align-last:justify;white-space:nowrap;letter-spacing:-0.1px">conventional wisdom states that this challenge is generally answered by the improvement of B-trees, we</div>
<div class="t" style="left:403.00px;top:866.85px;width:675px;font-size:14px;color:#1b1b1b;text-align:justify;text-align-last:justify;white-space:nowrap;letter-spacing:-0.1px">believe that a different method is necessary. The impact on software engineering of this technique has been</div>
<div class="t" style="left:403.00px;top:885.45px;width:675px;font-size:14px;color:#1b1b1b;text-align:justify;text-align-last:left;white-space:nowrap;letter-spacing:-0.1px">well-received.</div>
<div class="r" style="left:283px;top:316px;width:857px;height:636px;overflow:hidden;"><div class="t" style="left:120.00px;top:596.75px;width:675px;font-size:14px;color:#1b1b1b;text-align:justify;text-align-last:justify;white-space:nowrap;letter-spacing:-0.1px">Physicists largely study the partition table in the place of ubiquitous communication. Such a hypothesis at first</div>
<div class="t" style="left:120.00px;top:615.45px;width:675px;font-size:14px;color:#1b1b1b;text-align:justify;text-align-last:justify;white-space:nowrap;letter-spacing:-0.1px">glance seems unexpected but is buffeted by prior work in the field. Unfortunately, this solution is mostly well-</div>
<div class="t" style="left:120.00px;top:634.15px;width:675px;font-size:14px;color:#1b1b1b;text-align:justify;text-align-last:justify;white-space:nowrap;letter-spacing:-0.1px">received. Second, while we typically study the information theory, we believe that Ounce handles the evaluation</div>
</div>
<svg class="r" style="left:405px;top:398px" width="140" height="174" viewBox="405 398 140 174">
<path d="M434.1 477.2 L451.9 466.7 L484.2 467.5 L492.3 477.2 L508.5 482.1 L518.2 495 L531.1 517.6 L534.3 537 L527.9 551.6 L511.7 564.8 L439 564.8 L424.4 553.2 L414.7 527.3 L412.3 509.5 L419.5 488.5Z" fill="#3b4f9f"/>
<path d="M419.5 488.5 L434.1 477.2 L441 490 L440 520 L446 540 L440 562 L424.4 553.2 L414.7 527.3 L412.3 509.5Z" fill="#2f4189"/>
<path d="M500 490 L518.2 495 L531.1 517.6 L534.3 537 L527.9 551.6 L520 548 L514 520 L505 500Z" fill="#4458a8"/>
<path d="M466 488 L468 564" stroke="#2a3a7c" stroke-width="1.4" fill="none"/>
<path d="M454 462 L480 462 L480 478 L466 482 L455 476Z" fill="#c69373"/>
<path d="M455.8 474.9 L479.7 477.5 L478 490 L470 506 L462 494Z" fill="#a3a3a3"/>
<path d="M432.7 476 L453.2 465.5 L458 476 L470 506 L464 508 L450 482Z" fill="#34478f"/>
<path d="M480.6 466.4 L492 477 L482 482 L470 506 L478 485Z" fill="#2c3d82"/>
<path d="M446.4 440.7 L450.6 423.6 L472.9 419.4 L483.1 423.6 L484.8 436.5 L490 436.5 L488.2 447.6 L484 451 L480.6 463 L469.4 471.5 L459.2 468.9 L452.4 463 L449 452.7 L444.7 449.3Z" fill="#d9a882"/>
<path d="M452 457 Q458 468 469 470 Q478 466 481 458 Q478 468 469 471.5 Q457 470 452 457Z" fill="#b98462"/>
<path d="M441.2 422.8 L443 413.4 L450.6 408.3 L457.5 404 L465.2 403.1 L474.6 404.8 L483.1 410.8 L488.2 419.4 L488.2 432.2 L484.8 435.6 L481.4 422.8 L472.9 419.4 L457.5 421.1 L449.8 426.2 L447.2 439 L443.8 440.7 L442.1 432.2Z" fill="#161412"/>
<path d="M453.5 439.5 Q457.5 437.5 461.5 439.8 M470.5 437.8 Q474.5 435.8 478.5 438" stroke="#2a1d16" stroke-width="1.6" fill="none"/>
<path d="M460.5 456.8 Q468 459.5 475.5 456.5" stroke="#5a3a2c" stroke-width="1.6" fill="none"/>
<path d="M467 441 L465.5 450 L469 451" stroke="#b5805f" stroke-width="1" fill="none"/>
<path d="M448.6,531 Q470 526 495.5,522.5 Q502 518 508,513 Q514,511 516.5,513 Q516,520 510,525.7 L506.8,527.3 Q512,535 511.7,540.3 Q511,548 502,550 Q480,556 460,559.5 L441,560 Q440,552 446,545 Q452,538 448.6,531Z" fill="#d29f7b"/>
<path d="M447 545 Q475 538 508 538" stroke="#a5704f" stroke-width="1.5" fill="none"/>
<path d="M434 520 L446 517 L455 540 L441 562 L434 560 L428 540Z" fill="#3a4d9a"/>
<path d="M505 523 L513 520 L518 532 L516 552 L511 553 L509 537Z" fill="#4d5d8c"/>
<path d="M440 559.5 L511.7 556 L511.7 564.8 L439 564.8Z" fill="#2b3b7a"/>
</svg>
<svg class="r" style="left:935px;top:398px" width="140" height="174" viewBox="935 398 140 174">
<path d="M943.1 564.8 L943.9 527.3 L946.3 501.5 L951.2 488.5 L962 480 L985 474 L995 466 L1024 466 L1035 474 L1056 482 L1062.7 495 L1067.6 519.2 L1069.2 543.5 L1066.7 564.8Z" fill="#e0492f"/>
<path d="M972 497 Q969.5 520 973 542" stroke="#c23a24" stroke-width="1.4" fill="none"/>
<path d="M1045 499 Q1047 520 1043 539" stroke="#c23a24" stroke-width="1.4" fill="none"/>
<path d="M973 543 Q1010 543 1048 540 Q1062 540 1067 546" stroke="#c23a24" stroke-width="1.3" fill="none"/>
<path d="M973 543.5 L983.5 544 L984 555 L977 553 L973 549Z" fill="#9a6650"/>
<path d="M994.8 464.4 L1024.2 464.4 L1025 481 L1012 484 L995 481Z" fill="#d4412a"/>
<path d="M1009.5 404.5 L998 406 L989 411 L983 419 L979 429 L976.5 440 L975 452 L971 462 L966 471 L960 479 L968 482.5 L978 483.5 L986 481 L992 472 L991.5 450 L991.5 428 L1000 418.5 L1008 416 L1018 418 L1027 427 L1027.5 450 L1029 468 L1036 482 L1041 496 L1046 490 L1052 482 L1050 470 L1047 458 L1041 447 L1038 430 L1033 415 L1022 406Z" fill="#141212"/>
<path d="M991.5 428 L1000 418.5 L1008 416 L1018 418 L1027 427 L1027.5 445 L1024 458 L1017 466 L1008 468.1 L999 465 L993 455 L991 440Z" fill="#a87261"/>
<path d="M995.5 437.8 Q999 436 1002.5 438 M1013 437.8 Q1017 435.5 1021 437.5" stroke="#2e1f18" stroke-width="1.5" fill="none"/>
<path d="M1002 456.5 Q1008.5 460 1015 456.3" stroke="#e9aab3" stroke-width="2.2" fill="none"/>
<path d="M1007 441 L1006 450 L1009.5 451" stroke="#7d5040" stroke-width="1" fill="none"/>
</svg>
<div class="r" style="left:119px;top:953px;width:1177px;height:38px;background:#fafafa;border-radius:0 0 6px 6px;"></div>
<div class="r" style="left:119px;top:952px;width:1177px;height:1px;background:#d6d6d6;"></div>
<div class="t " style="left:129.60px;top:967.98px;font-size:10.3px;color:#262626;font-weight:normal;font-style:normal;">PAGE 1 OF 3</div>
<div class="t " style="left:206.30px;top:967.98px;font-size:10.3px;color:#262626;font-weight:normal;font-style:normal;">789 WORDS</div>
<div class="t " style="left:1098.00px;top:967.68px;font-size:10.3px;color:#262626;font-weight:normal;font-style:normal;">100%</div>
<div class="r" style="left:1136.5px;top:971.5px;width:12px;height:2px;background:#989898;"></div>
<div class="r" style="left:1159px;top:970.3px;width:95px;height:4.2px;background:#9a9a9a;border-radius:2px;"></div>
<div class="r" style="left:1159px;top:970.3px;width:48px;height:4.2px;background:#0066c2;border-radius:2px;"></div>
<div class="r" style="left:1195.8px;top:961.8px;width:21.2px;height:21.2px;background:#fff;border:1px solid #dcdcdc;border-radius:50%;box-sizing:border-box;"></div>
<div class="r" style="left:1199.1px;top:965.1px;width:14.6px;height:14.6px;background:#0066c2;border-radius:50%;"></div>
<div class="r" style="left:1264px;top:971.5px;width:12px;height:2px;background:#989898;"></div>
<div class="r" style="left:1269px;top:966.2px;width:2px;height:12.5px;background:#989898;"></div>
<div class="r" style="left:1262px;top:265px;width:233px;height:325.5px;background:#fafafa;border:1px solid #d2d2d2;border-radius:5px;box-sizing:border-box;box-shadow:0 5px 12px rgba(0,0,0,0.12),0 1px 2px rgba(0,0,0,0.06);"></div>
<div class="r" style="left:1267.5px;top:270px;width:223px;height:36px;background:#f2f2f2;border-radius:4px;"></div>
<div class="r" style="left:1267.5px;top:390px;width:223px;height:36px;background:#f2f2f2;border-radius:4px;"></div>
<div class="t " style="left:1277.40px;top:282.87px;font-size:12.2px;color:#141414;font-weight:bold;font-style:normal;">Ribbon Layout</div>
<div class="t " style="left:1277.20px;top:402.07px;font-size:12.2px;color:#141414;font-weight:bold;font-style:normal;">Show Ribbon</div>
<svg class="r" style="left:1279.5px;top:323.5px;" width="12" height="10" viewBox="0 0 12 10"><path d="M0.8 4.8 L4 8 L11 1" fill="none" stroke="#2a2a2a" stroke-width="1.2"/></svg>
<div class="t " style="left:1307.00px;top:323.17px;font-size:12.2px;color:#262626;font-weight:normal;font-style:normal;">Classic Ribbon</div>
<div class="t " style="left:1307.00px;top:362.17px;font-size:12.2px;color:#262626;font-weight:normal;font-style:normal;">Simplified Ribbon</div>
<div class="t " style="left:1307.00px;top:443.67px;font-size:12.2px;color:#262626;font-weight:normal;font-style:normal;">Full-screen mode</div>
<div class="t " style="left:1307.00px;top:481.87px;font-size:12.2px;color:#262626;font-weight:normal;font-style:normal;">Show tabs only</div>
<svg class="r" style="left:1279.5px;top:521px;" width="12" height="10" viewBox="0 0 12 10"><path d="M0.8 4.8 L4 8 L11 1" fill="none" stroke="#2a2a2a" stroke-width="1.2"/></svg>
<div class="t " style="left:1307.00px;top:521.27px;font-size:12.2px;color:#262626;font-weight:normal;font-style:normal;">Always show Ribbon</div>
<div class="r" style="left:1308px;top:547.5px;width:186px;height:1px;background:#e3e3e3;"></div>
<div class="t " style="left:1307.00px;top:564.37px;font-size:12.2px;color:#262626;font-weight:normal;font-style:normal;">Show Quick Access Toolbar</div>
</body></html>
